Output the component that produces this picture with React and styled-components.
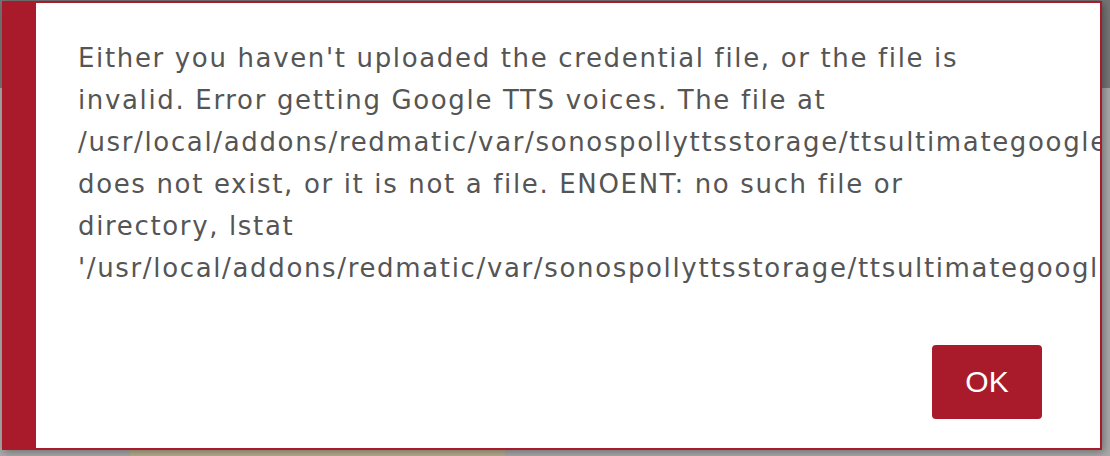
import React from 'react';
import styled, { createGlobalStyle } from 'styled-components';

const GlobalStyle = createGlobalStyle`
	html, body {
		margin: 0;
		padding: 0;
	}
	body {
		background: #a9a9a9;
		font-family: "Liberation Sans", Arial, Helvetica, sans-serif;
	}
`;

const Page = styled.div`
	position: relative;
	width: 1110px;
	height: 456px;
	overflow: hidden;
	background: #a9a9a9;
`;

const Header = styled.div`
	height: 88px;
	background: #767676;
`;

const Workspace = styled.div`
	display: flex;
	padding: 352px 0 0 130px;
	gap: 26px;
`;

const Tile = styled.div`
	width: 375px;
	height: 60px;
	background: #b7ae8f;
	color: #6d6a60;
	font-size: 30px;
	display: flex;
	align-items: flex-end;
	justify-content: center;
	line-height: 1;
`;

const TileLabel = styled.span`
	transform: translateY(-2px);
	opacity: 0.8;
`;

const Dialog = styled.div`
	position: absolute;
	top: 1px;
	left: 2px;
	width: 1100px;
	height: 449px;
	box-sizing: border-box;
	background: #fff;
	border: 2px solid #a91b2a;
	border-left-width: 34px;
	box-shadow: 2px 2px 8px rgba(0, 0, 0, 0.35);
	overflow: hidden;
	display: flex;
	flex-direction: column;
	justify-content: space-between;
	padding: 34px 58px 29px 42px;
`;

const Message = styled.div`
	max-width: 930px;
	font-family: "DejaVu Sans", "Liberation Sans", sans-serif;
	font-size: 26px;
	letter-spacing: 1.65px;
	line-height: 42px;
	color: #555;
`;

const Actions = styled.div`
	display: flex;
	justify-content: flex-end;
`;

const Button = styled.button`
	width: 110px;
	height: 74px;
	border: none;
	border-radius: 4px;
	background: #a91b2a;
	color: #fff;
	font-family: inherit;
	font-size: 30px;
	cursor: pointer;
`;

const App = () => {
	return (
		<Page>
			<GlobalStyle />
			<Header />
			<Workspace>
				<Tile>
					<TileLabel>vorhersage heute</TileLabel>
				</Tile>
			</Workspace>
			<Dialog>
				<Message>
					Either you haven't uploaded the credential file, or the file is invalid.
					Error getting Google TTS voices. The file at
					/usr/local/addons/redmatic/var/sonospollyttsstorage/ttsultimategooglecredentials/googlecredentials.json
					does not exist, or it is not a file. ENOENT: no such file or directory, lstat
					'/usr/local/addons/redmatic/var/sonospollyttsstorage/ttsultimategooglecredentials/googlecredentials.json'
				</Message>
				<Actions>
					<Button>OK</Button>
				</Actions>
			</Dialog>
		</Page>
	);
};

export default App;
